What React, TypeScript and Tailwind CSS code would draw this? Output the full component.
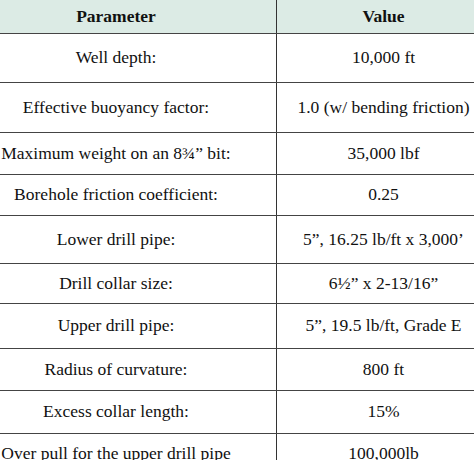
import React from "react";

const rows: { p: string; v: string; h: string }[] = [
  { p: "Well depth:", v: "10,000 ft", h: "h-[49px]" },
  { p: "Effective buoyancy factor:", v: "1.0 (w/ bending friction)", h: "h-[50px]" },
  { p: "Maximum weight on an 8¾” bit:", v: "35,000 lbf", h: "h-[42px]" },
  { p: "Borehole friction coefficient:", v: "0.25", h: "h-[41px]" },
  { p: "Lower drill pipe:", v: "5”, 16.25 lb/ft x 3,000’", h: "h-[48px]" },
  { p: "Drill collar size:", v: "6½” x 2-13/16”", h: "h-[40px]" },
  { p: "Upper drill pipe:", v: "5”, 19.5 lb/ft, Grade E", h: "h-[45px]" },
  { p: "Radius of curvature:", v: "800 ft", h: "h-[42px]" },
  { p: "Excess collar length:", v: "15%", h: "h-[43px]" },
  { p: "Over pull for the upper drill pipe", v: "100,000lb", h: "h-[40px]" },
];

export default function App() {
  return (
    <div
      className="w-[474px] h-[460px] overflow-hidden bg-white text-[#111111]"
      style={{ fontFamily: '"Liberation Serif", "Times New Roman", serif' }}
    >
      <div className="ml-[-44px] w-[534px] flex flex-col text-[17.5px] leading-none">
        <div className="flex h-[34px] bg-[#dcebe5] border-b border-[#444444] font-bold">
          <div className="w-[321px] shrink-0 flex items-center justify-center border-r border-[#333333]">
            Parameter
          </div>
          <div className="flex-1 flex items-center justify-center">Value</div>
        </div>
        {rows.map((r, i) => (
          <div key={i} className={`flex ${r.h} border-b border-[#444444]`}>
            <div className="w-[321px] shrink-0 flex items-center justify-center border-r border-[#333333] whitespace-nowrap">
              {r.p}
            </div>
            <div className="flex-1 flex items-center justify-center whitespace-nowrap">{r.v}</div>
          </div>
        ))}
      </div>
    </div>
  );
}
